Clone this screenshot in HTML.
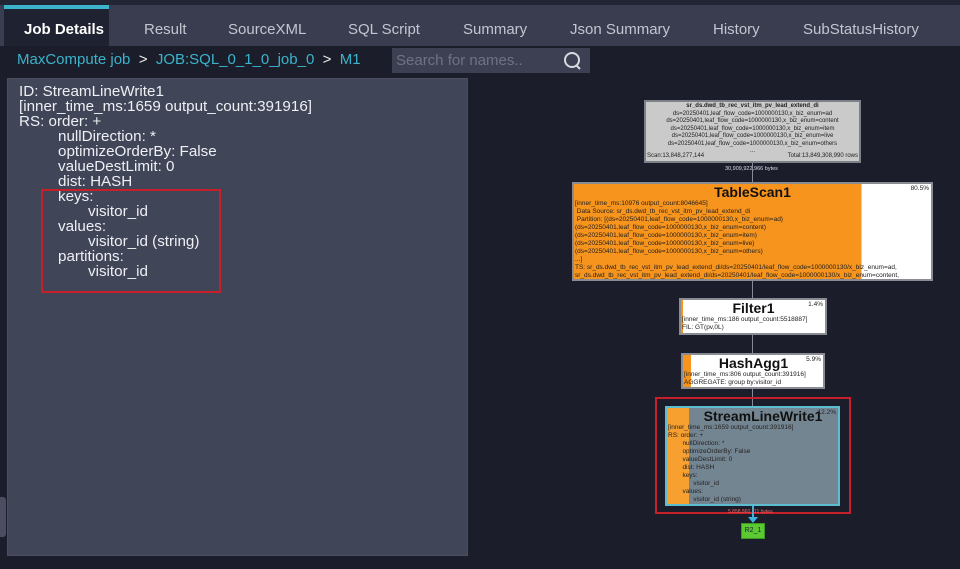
<!DOCTYPE html>
<html><head><meta charset="utf-8"><style>
*{margin:0;padding:0;box-sizing:border-box}
body{width:960px;height:569px;overflow:hidden;background:#1b1e2a;font-family:"Liberation Sans",sans-serif;position:relative}
.a{position:absolute}
.tabs{left:0;top:5px;width:960px;height:41px;background:#393d4f}
.tab{position:absolute;top:5px;height:41px;line-height:50px;color:#c3c6d0;font-size:15px}
.node{position:absolute;font-size:6.5px;line-height:8px;color:#222;overflow:hidden;white-space:nowrap}
.t{font-weight:bold;text-align:center;color:#111}
.lt{position:absolute;left:19px;top:84px;font-size:15.2px;line-height:15px;color:#eef0f4;white-space:nowrap}
.i1{padding-left:39px}.i2{padding-left:69px}
</style></head><body>
<div class="a" style="left:0;top:0;width:960px;height:5px;background:#222533"></div>
<div class="a tabs"></div>
<div class="a" style="left:4px;top:5px;width:105px;height:41px;background:#1f2230"></div>
<div class="a" style="left:4px;top:5px;width:105px;height:4px;background:#3bb3cc"></div>
<div class="tab" style="left:24px;color:#fff;font-weight:bold">Job Details</div>
<div class="tab" style="left:144px">Result</div>
<div class="tab" style="left:228px">SourceXML</div>
<div class="tab" style="left:348px">SQL Script</div>
<div class="tab" style="left:463px">Summary</div>
<div class="tab" style="left:570px">Json Summary</div>
<div class="tab" style="left:713px">History</div>
<div class="tab" style="left:803px">SubStatusHistory</div>
<div class="a" style="left:17px;top:51px;font-size:15px;color:#3bb3cc;white-space:nowrap">MaxCompute job <span style="color:#eee">&nbsp;&gt;&nbsp;</span> JOB:SQL_0_1_0_job_0 <span style="color:#eee">&nbsp;&gt;&nbsp;</span> M1</div>
<div class="a" style="left:392px;top:48px;width:198px;height:25px;background:#3c4052"></div>
<div class="a" style="left:396px;top:52px;font-size:15px;color:#6e7284">Search for names..</div>
<svg class="a" style="left:562px;top:50px" width="22" height="22"><circle cx="10" cy="10" r="7" fill="none" stroke="#d8dae0" stroke-width="2"/><line x1="14" y1="15" x2="18" y2="19" stroke="#d8dae0" stroke-width="2"/></svg>
<div class="a" style="left:7px;top:78px;width:461px;height:478px;background:#414558;border:1px solid #4a4e60"></div>
<div class="lt">
<div>ID: StreamLineWrite1</div>
<div>[inner_time_ms:1659 output_count:391916]</div>
<div>RS: order: +</div>
<div class="i1">nullDirection: *</div>
<div class="i1">optimizeOrderBy: False</div>
<div class="i1">valueDestLimit: 0</div>
<div class="i1">dist: HASH</div>
<div class="i1">keys:</div>
<div class="i2">visitor_id</div>
<div class="i1">values:</div>
<div class="i2">visitor_id (string)</div>
<div class="i1">partitions:</div>
<div class="i2">visitor_id</div>
</div>
<div class="a" style="left:41px;top:189px;width:180px;height:104px;border:2px solid #c8202a"></div>
<div class="a" style="left:0;top:497px;width:6px;height:40px;background:#4a4e60;border-radius:0 3px 3px 0"></div>
<!-- graph -->
<div class="node" style="left:644px;top:100px;width:217px;height:63px;background:#cacaca;border:2px solid #7e8088;text-align:center;font-size:6px;line-height:7.5px;padding-top:1px">
<b>sr_ds.dwd_tb_rec_vst_itm_pv_lead_extend_di</b><br>ds=20250401,leaf_flow_code=1000000130,x_biz_enum=ad<br>ds=20250401,leaf_flow_code=1000000130,x_biz_enum=content<br>ds=20250401,leaf_flow_code=1000000130,x_biz_enum=item<br>ds=20250401,leaf_flow_code=1000000130,x_biz_enum=live<br>ds=20250401,leaf_flow_code=1000000130,x_biz_enum=others<br>...
<div style="position:absolute;left:1px;bottom:1px">Scan:13,848,277,144</div><div style="position:absolute;right:1px;bottom:1px">Total:13,849,308,990 rows</div></div>
<div class="a" style="left:752px;top:163px;width:1px;height:19px;background:#889"></div>
<div class="a" style="left:725px;top:166px;font-size:5.5px;color:#dde">30,909,922,966 bytes</div>
<div class="node" style="left:572px;top:182px;width:361px;height:99px;background:linear-gradient(90deg,#f7941d 80.5%,#fff 80.5%);border:2px solid #8a8c94;padding:0 1px">
<div class="t" style="font-size:14px;line-height:16px">TableScan1</div>
<div style="position:absolute;right:2px;top:1px">80.5%</div>
[inner_time_ms:10976 output_count:8046645]<br>&nbsp;Data Source: sr_ds.dwd_tb_rec_vst_itm_pv_lead_extend_di<br>&nbsp;Partition: [(ds=20250401,leaf_flow_code=1000000130,x_biz_enum=ad)<br>(ds=20250401,leaf_flow_code=1000000130,x_biz_enum=content)<br>(ds=20250401,leaf_flow_code=1000000130,x_biz_enum=item)<br>(ds=20250401,leaf_flow_code=1000000130,x_biz_enum=live)<br>(ds=20250401,leaf_flow_code=1000000130,x_biz_enum=others)<br>...]<br>TS: sr_ds.dwd_tb_rec_vst_itm_pv_lead_extend_di/ds=20250401/leaf_flow_code=1000000130/x_biz_enum=ad,<br>sr_ds.dwd_tb_rec_vst_itm_pv_lead_extend_di/ds=20250401/leaf_flow_code=1000000130/x_biz_enum=content,</div>
<div class="a" style="left:752px;top:281px;width:1px;height:17px;background:#889"></div>
<div class="node" style="left:679px;top:298px;width:148px;height:37px;background:linear-gradient(90deg,#f7941d 2px,#fff 2px);border:2px solid #8a8c94;padding-left:1px">
<div class="t" style="font-size:14px;line-height:16px">Filter1</div><div style="position:absolute;right:2px;top:1px">1.4%</div>
[inner_time_ms:186 output_count:5518887]<br>FIL: GT(pv,0L)</div>
<div class="a" style="left:752px;top:335px;width:1px;height:18px;background:#889"></div>
<div class="node" style="left:681px;top:353px;width:144px;height:36px;background:linear-gradient(90deg,#f7941d 8px,#fff 8px);border:2px solid #8a8c94;padding-left:1px">
<div class="t" style="font-size:14px;line-height:16px">HashAgg1</div><div style="position:absolute;right:2px;top:1px">5.9%</div>
[inner_time_ms:806 output_count:391916]<br>AGGREGATE: group by:visitor_id</div>
<div class="a" style="left:752px;top:389px;width:1px;height:17px;background:#889"></div>
<div class="a" style="left:655px;top:397px;width:196px;height:117px;border:2px solid #c8202a"></div>
<div class="node" style="left:665px;top:406px;width:175px;height:100px;background:linear-gradient(90deg,#f7a030 22px,#748592 22px);border:2px solid #5cbcd0;padding-left:1px">
<div class="t" style="font-size:14px;line-height:16px;padding-left:20px">StreamLineWrite1</div><div style="position:absolute;right:2px;top:1px">12.2%</div>
[inner_time_ms:1659 output_count:391916]<br>RS: order: +<br>&nbsp;&nbsp;&nbsp;&nbsp;&nbsp;&nbsp;&nbsp;&nbsp;nullDirection: *<br>&nbsp;&nbsp;&nbsp;&nbsp;&nbsp;&nbsp;&nbsp;&nbsp;optimizeOrderBy: False<br>&nbsp;&nbsp;&nbsp;&nbsp;&nbsp;&nbsp;&nbsp;&nbsp;valueDestLimit: 0<br>&nbsp;&nbsp;&nbsp;&nbsp;&nbsp;&nbsp;&nbsp;&nbsp;dist: HASH<br>&nbsp;&nbsp;&nbsp;&nbsp;&nbsp;&nbsp;&nbsp;&nbsp;keys:<br>&nbsp;&nbsp;&nbsp;&nbsp;&nbsp;&nbsp;&nbsp;&nbsp;&nbsp;&nbsp;&nbsp;&nbsp;&nbsp;&nbsp;visitor_id<br>&nbsp;&nbsp;&nbsp;&nbsp;&nbsp;&nbsp;&nbsp;&nbsp;values:<br>&nbsp;&nbsp;&nbsp;&nbsp;&nbsp;&nbsp;&nbsp;&nbsp;&nbsp;&nbsp;&nbsp;&nbsp;&nbsp;&nbsp;visitor_id (string)</div>
<div class="a" style="left:752px;top:506px;width:2px;height:14px;background:#3bb3e0"></div>
<div class="a" style="left:748px;top:517px;width:0;height:0;border-left:5px solid transparent;border-right:5px solid transparent;border-top:6px solid #3bb3e0"></div>
<div class="a" style="left:728px;top:509px;font-size:5px;color:#e66">5,858,860,111 bytes</div>
<div class="a" style="left:741px;top:523px;width:24px;height:16px;background:#5cc832;border:1px solid #3a9a20;font-size:7px;line-height:14px;text-align:center;color:#123">R2_1</div>
</body></html>
